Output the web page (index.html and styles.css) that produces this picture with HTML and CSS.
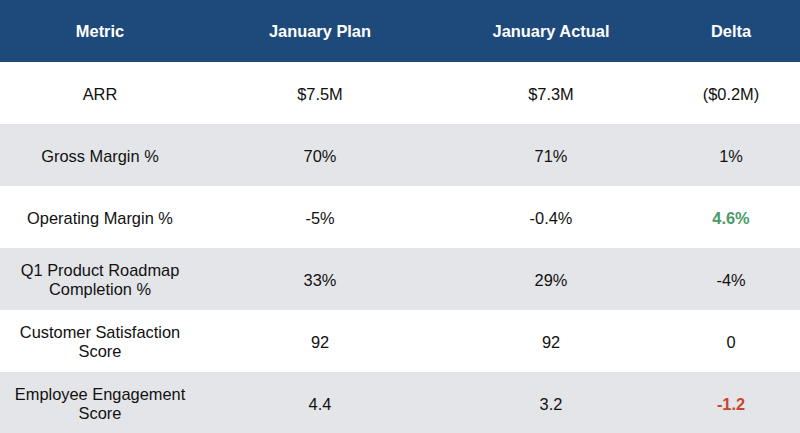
FILE: index.html
```html
<!DOCTYPE html>
<html>
<head>
<meta charset="utf-8">
<link rel="stylesheet" href="styles.css">
</head>
<body>
<table class="kpi">
  <colgroup>
    <col class="c1"><col class="c2"><col class="c3"><col class="c4">
  </colgroup>
  <thead>
    <tr><th>Metric</th><th>January Plan</th><th>January Actual</th><th>Delta</th></tr>
  </thead>
  <tbody>
    <tr><td>ARR</td><td>$7.5M</td><td>$7.3M</td><td>($0.2M)</td></tr>
    <tr class="alt"><td>Gross Margin %</td><td>70%</td><td>71%</td><td>1%</td></tr>
    <tr><td>Operating Margin %</td><td>-5%</td><td>-0.4%</td><td class="pos">4.6%</td></tr>
    <tr class="alt"><td>Q1 Product Roadmap<br>Completion %</td><td>33%</td><td>29%</td><td>-4%</td></tr>
    <tr><td>Customer Satisfaction<br>Score</td><td>92</td><td>92</td><td>0</td></tr>
    <tr class="alt"><td>Employee Engagement<br>Score</td><td>4.4</td><td>3.2</td><td class="neg">-1.2</td></tr>
  </tbody>
</table>
</body>
</html>
```

FILE: styles.css
```css
html, body {
  margin: 0;
  padding: 0;
  background: #ffffff;
}
body {
  font-family: "Liberation Sans", Arial, sans-serif;
  color: #111111;
}
.kpi {
  width: 800px;
  border-collapse: collapse;
  table-layout: fixed;
  font-size: 16.4px;
  line-height: 19px;
}
.c1 { width: 200px; }
.c2 { width: 240px; }
.c3 { width: 222px; }
.c4 { width: 138px; }
.kpi th {
  background: #1d4a7a;
  color: #ffffff;
  font-weight: bold;
  height: 62px;
  padding: 0;
  text-align: center;
  vertical-align: middle;
}
.kpi td {
  height: 60px;
  padding: 2px 0 0 0;
  text-align: center;
  vertical-align: middle;
}
.kpi tr.alt td {
  background: #e4e5e8;
}
.kpi td.pos {
  color: #4a9a67;
  font-weight: bold;
}
.kpi td.neg {
  color: #c9462c;
  font-weight: bold;
}
```
